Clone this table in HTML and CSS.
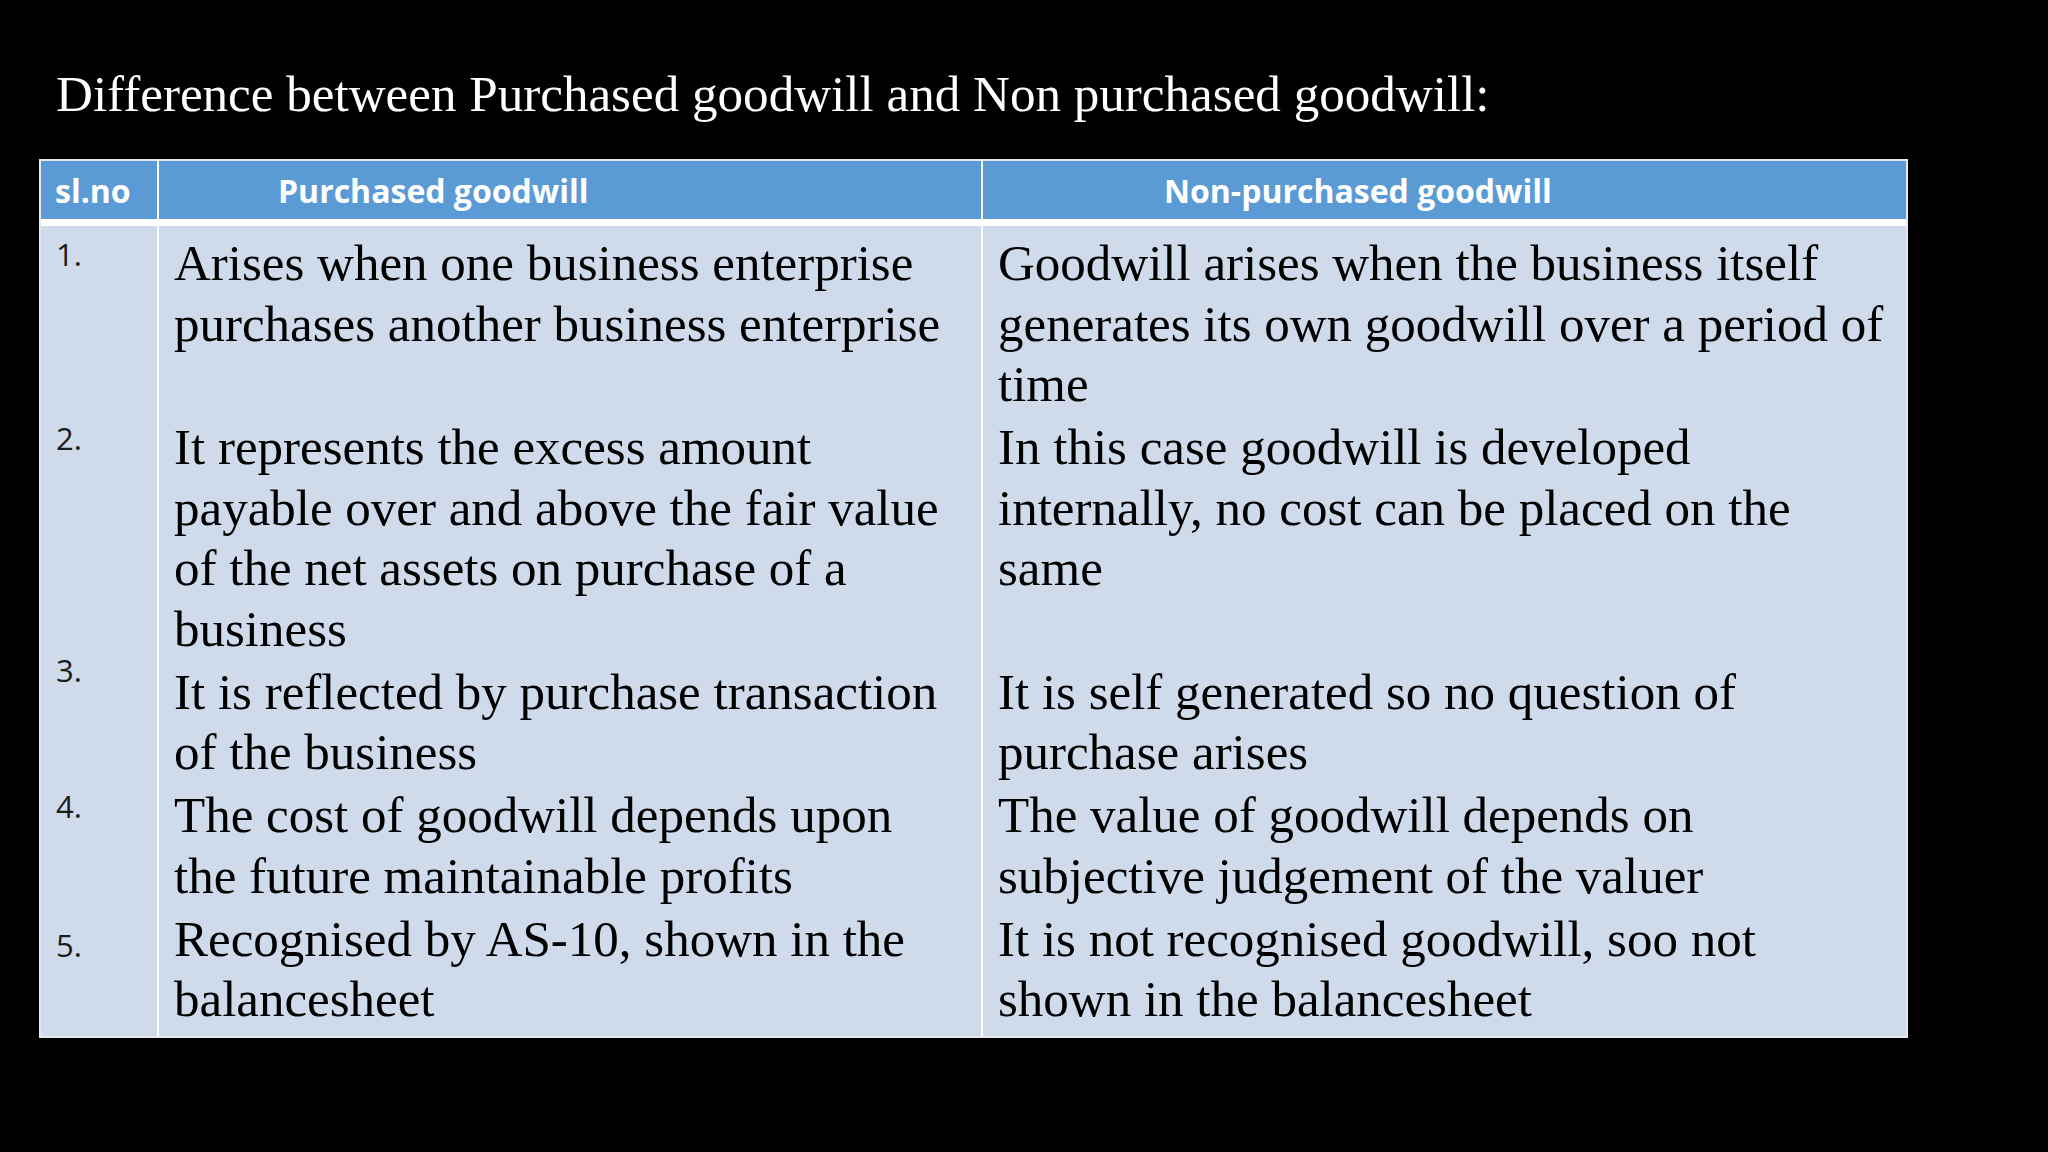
FILE: index.html
```html
<!DOCTYPE html>
<html lang="en">
<head>
<meta charset="utf-8">
<title>Difference between Purchased goodwill and Non purchased goodwill</title>
<link rel="stylesheet" href="styles.css">
</head>
<body>
<main class="slide">
  <h1 class="title">Difference between Purchased goodwill and Non purchased goodwill:</h1>
  <table class="compare">
    <colgroup>
      <col class="c-num">
      <col class="c-left">
      <col class="c-right">
    </colgroup>
    <thead>
      <tr>
        <th class="h-num">sl.no</th>
        <th class="h-left">Purchased goodwill</th>
        <th class="h-right">Non-purchased goodwill</th>
      </tr>
    </thead>
    <tbody>
      <tr>
        <td class="num">1.</td>
        <td><div class="txt">Arises when one business enterprise<br>purchases another business enterprise</div></td>
        <td><div class="txt">Goodwill arises when the business itself<br>generates its own goodwill over a period of<br>time</div></td>
      </tr>
      <tr>
        <td class="num">2.</td>
        <td><div class="txt">It represents the excess amount<br>payable over and above the fair value<br>of the net assets on purchase of a<br>business</div></td>
        <td><div class="txt">In this case goodwill is developed<br>internally, no cost can be placed on the<br>same</div></td>
      </tr>
      <tr>
        <td class="num num-high">3.</td>
        <td><div class="txt">It is reflected by purchase transaction<br>of the business</div></td>
        <td><div class="txt">It is self generated so no question of<br>purchase arises</div></td>
      </tr>
      <tr>
        <td class="num">4.</td>
        <td><div class="txt">The cost of goodwill depends upon<br>the future maintainable profits</div></td>
        <td><div class="txt">The value of goodwill depends on<br>subjective judgement of the valuer</div></td>
      </tr>
      <tr>
        <td class="num num-low">5.</td>
        <td><div class="txt">Recognised by AS-10, shown in the<br>balancesheet</div></td>
        <td><div class="txt">It is not recognised goodwill, soo not<br>shown in the balancesheet</div></td>
      </tr>
    </tbody>
  </table>
</main>
</body>
</html>
```

FILE: styles.css
```css
html, body {
  margin: 0;
  padding: 0;
  background: #000;
}

body {
  width: 2048px;
  height: 1152px;
  overflow: hidden;
}

.slide {
  padding-top: 64px;
}

.title {
  margin: 0 0 0 56px;
  font-family: "Liberation Serif", "Times New Roman", serif;
  font-weight: normal;
  font-size: 51.1px;
  line-height: 60px;
  color: #fff;
}

.compare {
  margin: 35px 0 0 39px;
  width: 1869px;
  table-layout: fixed;
  border-collapse: separate;
  border-spacing: 0;
  border: 2px solid #e3e8ef;
}

.c-num { width: 116px; }
.c-left { width: 824px; }
.c-right { width: 925px; }

.compare th {
  background: #5b9bd5;
  color: #fff;
  font-family: "Open Sans", "Noto Sans", sans-serif;
  font-weight: 700;
  font-size: 32px;
  line-height: 57px;
  padding: 1px 0 0;
  text-align: left;
  white-space: nowrap;
  border-bottom: 7px solid #fff;
}

.compare th + th,
.compare td + td {
  border-left: 2px solid #fff;
}

.h-num { padding-left: 14px !important; }
.h-left { padding-left: 119px !important; }
.h-right { padding-left: 181px !important; }

.compare td {
  background: #cfdbeb;
  vertical-align: top;
  padding: 7px 15px 0;
  color: #000;
  font-family: "Liberation Serif", "Times New Roman", serif;
  font-size: 51px;
  line-height: 60.5px;
  white-space: nowrap;
}

.compare .txt {
  margin-bottom: -4.5px;
}

.compare tbody tr:last-child td {
  padding-bottom: 11px;
}

.compare td.num {
  padding: 13px 0 0 15px;
  font-family: "Open Sans", "Noto Sans", sans-serif;
  font-size: 31px;
  line-height: 31px;
  color: #1c1c1c;
}

.compare td.num-high {
  padding-top: 0;
}

.compare td.num-low {
  padding-top: 28px;
}
```
